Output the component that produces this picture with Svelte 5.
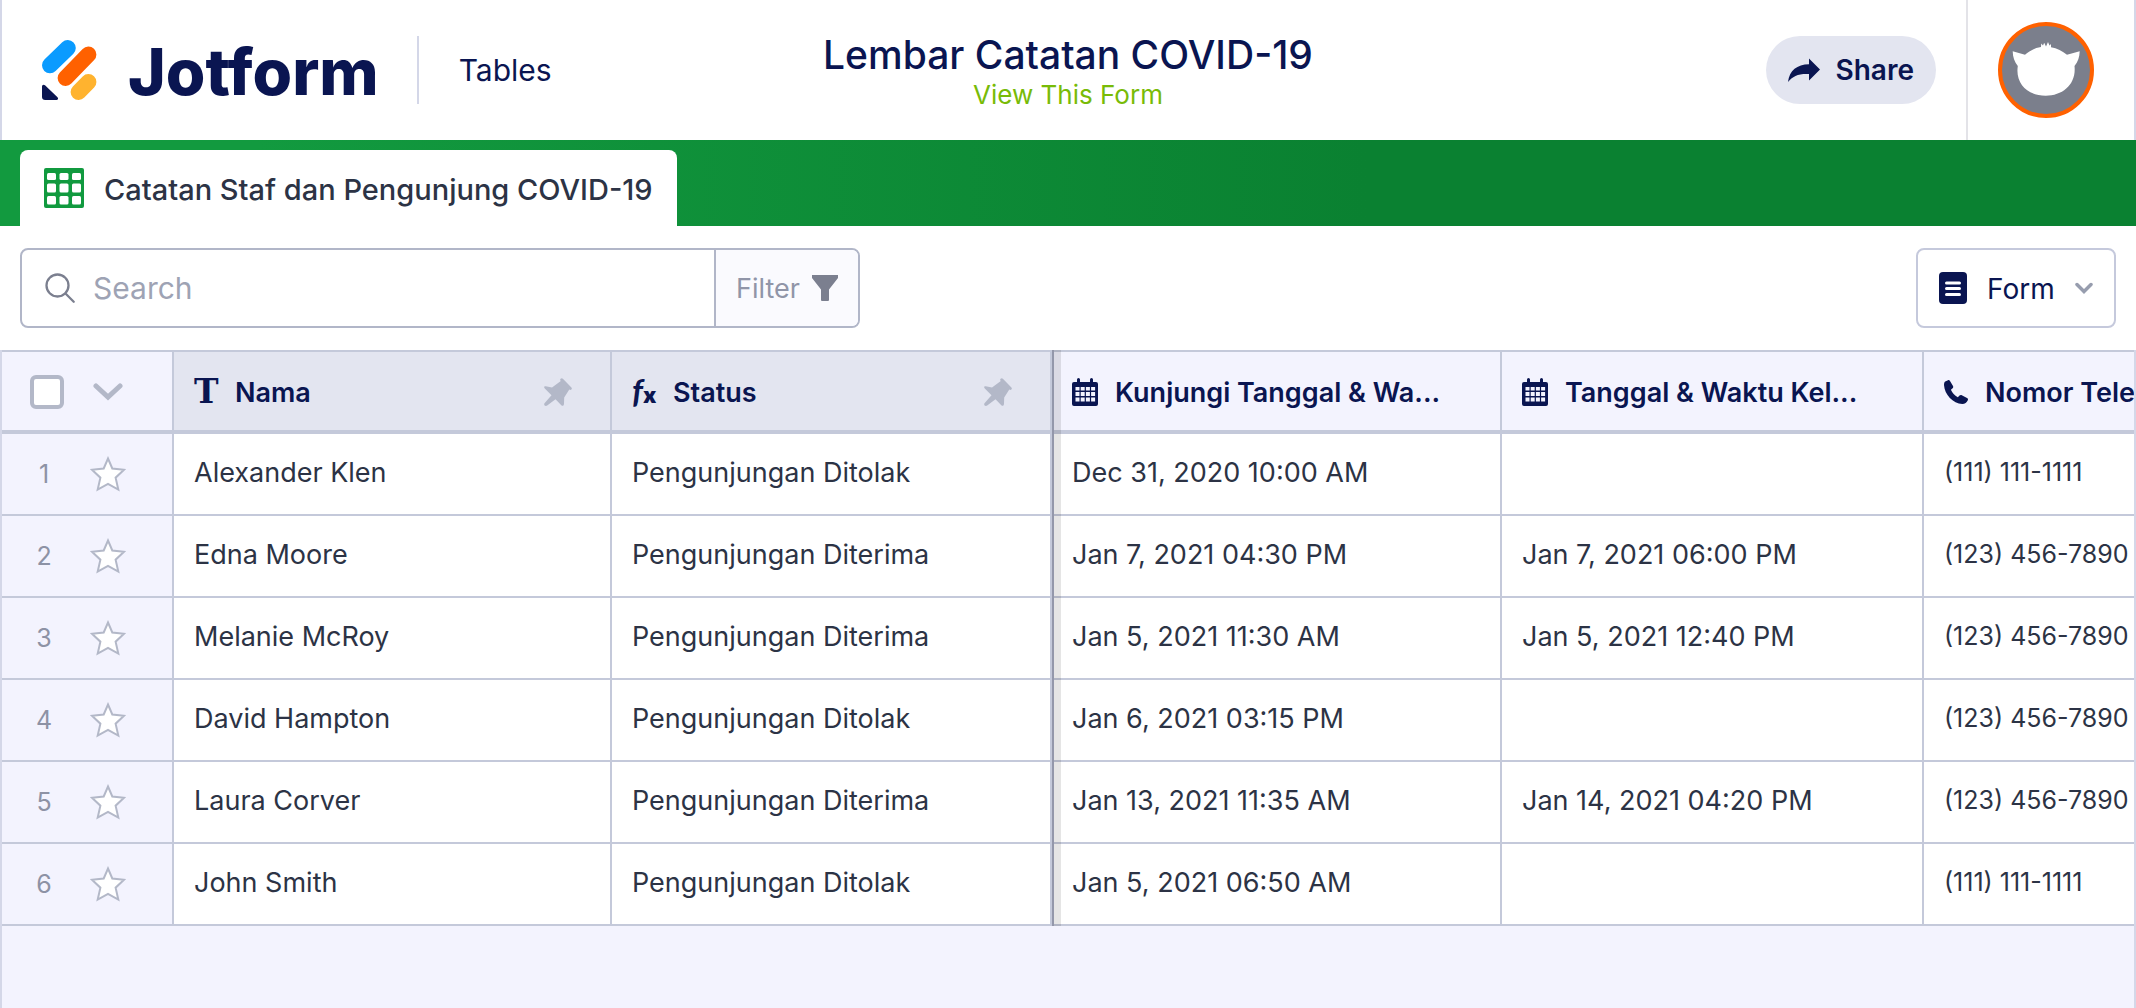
<script>
  const columns = [
    { key: 'name', label: 'Nama', icon: 'text', pinned: true },
    { key: 'status', label: 'Status', icon: 'formula', pinned: true },
    { key: 'visit', label: 'Kunjungi Tanggal & Wa...', icon: 'date' },
    { key: 'leave', label: 'Tanggal & Waktu Kel...', icon: 'date' },
    { key: 'phone', label: 'Nomor Telepon', icon: 'phone' }
  ];

  const rows = [
    { name: 'Alexander Klen', status: 'Pengunjungan Ditolak', visit: 'Dec 31, 2020 10:00 AM', leave: '', phone: '(111) 111-1111' },
    { name: 'Edna Moore', status: 'Pengunjungan Diterima', visit: 'Jan 7, 2021 04:30 PM', leave: 'Jan 7, 2021 06:00 PM', phone: '(123) 456-7890' },
    { name: 'Melanie McRoy', status: 'Pengunjungan Diterima', visit: 'Jan 5, 2021 11:30 AM', leave: 'Jan 5, 2021 12:40 PM', phone: '(123) 456-7890' },
    { name: 'David Hampton', status: 'Pengunjungan Ditolak', visit: 'Jan 6, 2021 03:15 PM', leave: '', phone: '(123) 456-7890' },
    { name: 'Laura Corver', status: 'Pengunjungan Diterima', visit: 'Jan 13, 2021 11:35 AM', leave: 'Jan 14, 2021 04:20 PM', phone: '(123) 456-7890' },
    { name: 'John Smith', status: 'Pengunjungan Ditolak', visit: 'Jan 5, 2021 06:50 AM', leave: '', phone: '(111) 111-1111' }
  ];

  let search = $state('');
  let allSelected = $state(false);
  let view = $state('form');
</script>

<div class="page">
  <header>
    <div class="brand">
      <a class="logo" href="#home">
        <svg width="56" height="60" viewBox="0 0 56 60" fill="none" stroke-width="16" stroke-linecap="round">
          <path d="M8 25.3 25.8 8" stroke="#0a9bff" />
          <path d="M23.6 38 46.4 14.5" stroke="#ff6100" />
          <path d="M36.6 52 46.4 42" stroke="#ffb32f" />
          <path d="M0 46.6c0-1.8 1.7-2.5 3-1.3l12.5 11.9c1.2 1.2.5 2.8-1 2.8H3.2C1.3 60 0 58.8 0 57z" fill="#0a1551" />
        </svg>
        <span>Jotform</span>
      </a>
      <a class="product" href="#tables">Tables</a>
    </div>

    <div class="title">
      <h1>Lembar Catatan COVID-19</h1>
      <a href="#form">View This Form</a>
    </div>

    <div class="account">
      <button class="share">
        <svg width="32" height="24" viewBox="0 0 32 24" fill="#0a1551">
          <path d="M21 .5 32 11.5 21 22.5V16C11 15.4 4.5 18 0 24 1.5 12.5 9 6.5 21 6.3z" />
        </svg>
        Share
      </button>
      <button class="profile" aria-label="Account">
        <svg width="96" height="96" viewBox="0 0 96 96">
          <circle cx="48" cy="48" r="46" fill="#7b7f8c" stroke="#ff6100" stroke-width="4" />
          <path fill="#fff" d="M14.7 29.3 27 32.8C32 28.5 37 25.8 43 25L43.2 21.5 45 23.5 46.2 20.8 48 24.5 50 20 51.5 23.5 53 22V25.2C59 26 64.5 29 69 32.8L81.7 29.3C81.5 35 80 40 76.5 44 78.5 62 65 73.7 47.7 73.7S17 62 19.8 44C16.5 40 14.8 35 14.7 29.3z" />
        </svg>
      </button>
    </div>
  </header>

  <nav>
    <a class="tab" href="#sheet">
      <svg width="40" height="40" viewBox="0 0 40 40">
        <rect width="40" height="40" rx="2" fill="#119a3f" />
        <g fill="#fff">
          {#each [3, 15.5, 28] as x}
            <rect {x} y="5" width="9" height="7" rx="1.5" />
            <rect {x} y="15.5" width="9" height="9" rx="1.5" />
            <rect {x} y="28" width="9" height="8.5" rx="1.5" />
          {/each}
        </g>
      </svg>
      <span>Catatan Staf dan Pengunjung COVID-19</span>
    </a>
  </nav>

  <div class="toolbar">
    <div class="search">
      <label for="search" aria-label="Search">
        <svg width="30" height="30" viewBox="0 0 30 30" fill="none" stroke="#7b7f8f" stroke-width="2.3" stroke-linecap="round">
          <circle cx="12.5" cy="12.5" r="11" />
          <path d="M20.5 20.5 28.7 28.7" />
        </svg>
      </label>
      <input id="search" type="text" placeholder="Search" bind:value={search} />
      <button class="filter">
        Filter
        <svg width="26" height="26" viewBox="0 0 26 26" fill="#7b7f8f">
          <path d="M0 0H26V3L17 14.5V25Q17 26 16 26H10Q9 26 9 25V14.5L0 3z" />
        </svg>
      </button>
    </div>

    <label class="view">
      <svg width="28" height="32" viewBox="0 0 28 32">
        <rect width="28" height="32" rx="4" fill="#0a1551" />
        <path d="M7.5 11H20.5M7.5 16.5H20.5M7.5 22.5H20.5" stroke="#fff" stroke-width="3" stroke-linecap="round" />
      </svg>
      <select bind:value={view} aria-label="View">
        <option value="form">Form</option>
      </select>
      <svg class="arrow" width="18" height="12" viewBox="0 0 18 12" fill="none" stroke="#979dae" stroke-width="3.5" stroke-linecap="round">
        <path d="M2 2.5 9 9.5 16 2.5" />
      </svg>
    </label>
  </div>

  <main>
    <table>
      <thead>
        <tr>
          <th class="select-col">
            <div class="row-tools">
              <input type="checkbox" aria-label="Select all rows" bind:checked={allSelected} />
              <button aria-label="Selection options">
                <svg width="30" height="20" viewBox="0 0 30 20" fill="none" stroke="#b3b8c8" stroke-width="5" stroke-linecap="round">
                  <path d="M3 4 15 15 27 4" />
                </svg>
              </button>
            </div>
          </th>
          {#each columns as column}
            <th class="{column.key}-col" class:pinned={column.pinned} scope="col">
              <div class="heading">
                {#if column.icon === 'text'}
                  <span class="type-text" aria-hidden="true">T</span>
                {:else if column.icon === 'formula'}
                  <span class="type-formula" aria-hidden="true"><i>f</i><b>x</b></span>
                {:else if column.icon === 'date'}
                  <svg width="26" height="28" viewBox="0 0 26 28">
                    <path fill="#0a1551" d="M5 4V1.5a1.5 1.5 0 0 1 3 0V4h10V1.5a1.5 1.5 0 0 1 3 0V4h3a2 2 0 0 1 2 2V26a2 2 0 0 1-2 2H2a2 2 0 0 1-2-2V6a2 2 0 0 1 2-2z" />
                    <g fill="#f3f3fe">
                      {#each [3.5, 8.7, 13.9, 19.1] as x}
                        <rect {x} y="9" width="4" height="3.5" />
                        <rect {x} y="14" width="4" height="4" />
                        <rect {x} y="19.5" width="4" height="4" />
                      {/each}
                    </g>
                  </svg>
                {:else}
                  <svg width="24" height="24" viewBox="0 0 24 24">
                    <path fill="#0a1551" d="M1.2 1.5 4 .2C4.8-.1 5.5.1 6 1L9 6C9.4 6.9 9.2 7.6 8.6 8.2L6.9 9.8C8.3 13 10.6 15.5 13.8 17.2L15.5 15.5C16.2 14.9 17 14.8 17.8 15.2L23 18C24 18.5 24.2 19.3 23.8 20.2 22.8 22.4 20.9 24 18.3 24 9 23.5.5 14.5 0 5 0 3.4.3 2.2 1.2 1.5z" />
                  </svg>
                {/if}
                <span>{column.label}</span>
                {#if column.pinned}
                  <button class="pin" aria-label="Unpin {column.label}">
                    <svg width="28" height="28" viewBox="0 0 28 28" fill="#b3b8c8">
                      <path d="M16.6.8C17.3.1 18.2.1 18.9.8L27.4 9.5C28 10.2 28 11 27.4 11.6 26.7 12.2 25.9 12 25.3 11.5L20.2 19.5 20 25.5C20 28 18.5 28.4 17.3 27.2L11.5 21.3 3.2 27.6C1.2 28.7-.6 27 .5 25.2L7.5 17.3.8 10.5C-.4 9.3.2 8 1.7 8.2L8 9.5 16.8 3.1C16 2.3 16 1.4 16.6.8z" />
                    </svg>
                  </button>
                {/if}
              </div>
            </th>
          {/each}
        </tr>
      </thead>
      <tbody>
        {#each rows as row, i}
          <tr>
            <th class="select-col" scope="row">
              <div class="row-tools">
                <span class="number">{i + 1}</span>
                <button aria-label="Star row {i + 1}">
                  <svg width="36" height="36" viewBox="0 0 36 36" fill="#fff" stroke="#b3b8c8" stroke-width="2">
                    <path d="M18 2.5 22.3 12.5 34 13.8 25.6 21.7 28.3 33.5 18 27.8 7.7 33.5 10.4 21.7 2 13.8 13.7 12.5z" />
                  </svg>
                </button>
              </div>
            </th>
            {#each columns as column}
              <td class="{column.key}-col">{row[column.key]}</td>
            {/each}
          </tr>
        {/each}
      </tbody>
    </table>
  </main>
</div>

<style>
  :global(body) {
    margin: 0;
  }

  .page,
  .page * {
    box-sizing: border-box;
  }

  .page {
    display: flex;
    flex-direction: column;
    min-height: 100vh;
    overflow: hidden;
    background: #fff;
    color: #2c3345;
    font-family: Inter, "Liberation Sans", sans-serif;
    font-size: 27px;
  }

  svg {
    display: block;
    flex: none;
  }

  a {
    color: inherit;
    text-decoration: none;
  }

  button,
  input,
  select {
    margin: 0;
    padding: 0;
    border: none;
    background: none;
    color: inherit;
    font: inherit;
  }

  button {
    cursor: pointer;
  }

  header {
    display: grid;
    grid-template-columns: 1fr auto 1fr;
    height: 140px;
    border: solid #d4d7e8;
    border-width: 0 2px;
    color: #0a1551;
  }

  .brand {
    display: flex;
    align-items: center;
    padding-left: 40px;
  }

  .logo {
    display: flex;
    align-items: center;
    gap: 30px;
    font-size: 64px;
    font-weight: 800;
    line-height: 68px;
  }

  .logo span {
    padding-top: 4px;
  }

  .product {
    margin-left: 38px;
    padding-left: 40px;
    border-left: 2px solid #d4d7e8;
    font-size: 30px;
    line-height: 68px;
  }

  .title {
    display: flex;
    flex-direction: column;
    align-items: center;
    padding-top: 33px;
  }

  h1 {
    margin: 0;
    font-size: 39px;
    font-weight: 500;
    line-height: 44px;
  }

  .title a {
    color: #78bb07;
    font-size: 26px;
    line-height: 36px;
  }

  .account {
    display: flex;
    align-items: center;
    justify-content: flex-end;
  }

  .share {
    display: flex;
    align-items: center;
    gap: 16px;
    height: 68px;
    margin-right: 30px;
    padding: 0 22px;
    border-radius: 34px;
    background: #e3e5f0;
    font-size: 28px;
    font-weight: 600;
  }

  .profile {
    height: 100%;
    padding: 0 40px 0 30px;
    border-left: 2px solid #e3e3e8;
  }

  nav {
    display: flex;
    height: 86px;
    padding: 10px 20px 0;
    background: linear-gradient(90deg, #129a3f 12%, #0a8131 64%);
  }

  .tab {
    display: flex;
    align-items: center;
    gap: 20px;
    padding: 0 24px;
    border-radius: 8px 8px 0 0;
    background: #fff;
    font-size: 29px;
    font-weight: 500;
  }

  .tab span {
    padding-top: 2px;
  }

  .toolbar {
    display: flex;
    justify-content: space-between;
    padding: 22px 20px;
  }

  .search {
    display: flex;
    align-items: center;
    width: 840px;
    height: 80px;
    border: 2px solid #b1b6c8;
    border-radius: 8px;
    overflow: hidden;
  }

  .search label {
    padding: 0 18px 0 23px;
  }

  .search input {
    flex: 1;
    min-width: 0;
    height: 100%;
    font-size: 30px;
    outline: none;
  }

  .search input::placeholder {
    color: #9ea3b4;
    opacity: 1;
  }

  .filter {
    display: flex;
    align-items: center;
    gap: 12px;
    height: 100%;
    padding: 0 20px;
    border-left: 2px solid #b1b6c8;
    background: #fafafe;
    color: #9095a8;
  }

  .view {
    display: flex;
    align-items: center;
    height: 80px;
    padding: 0 21px;
    border: 2px solid #c5c9dc;
    border-radius: 8px;
    color: #0a1551;
    font-size: 28px;
  }

  .view select {
    margin: 0 20px;
    padding-top: 2px;
    appearance: none;
    cursor: pointer;
  }

  .arrow {
    pointer-events: none;
  }

  main {
    flex: 1;
    border: solid #d4d7e8;
    border-width: 0 2px;
    background: #f3f3fe;
    overflow: hidden;
  }

  table {
    width: 100%;
    table-layout: fixed;
    border-collapse: separate;
    border-spacing: 0;
  }

  th,
  td {
    position: relative;
    height: 82px;
    padding: 0 20px;
    border: solid #c4c9da;
    border-width: 0 2px 2px 0;
    text-align: left;
    white-space: nowrap;
    overflow: hidden;
  }

  td {
    padding-bottom: 4px;
    background: #fff;
  }

  thead th {
    height: 84px;
    padding-top: 2px;
    border-width: 2px 2px 4px 0;
    background: #f3f3fe;
    color: #0a1551;
    font-weight: 600;
  }

  thead th.pinned {
    background: #e3e5f0;
  }

  .select-col {
    width: 172px;
    padding-left: 28px;
    font-weight: 400;
  }

  .name-col {
    width: 438px;
  }

  .status-col {
    width: 440px;
  }

  .visit-col {
    width: 450px;
    overflow: visible;
  }

  .leave-col {
    width: 422px;
  }

  .phone-col {
    padding-right: 0;
    border-right: none;
  }

  td.phone-col {
    font-size: 25px;
  }

  /* edge of the pinned columns */
  .visit-col::before {
    content: '';
    position: absolute;
    top: 0;
    bottom: -2px;
    left: 0;
    width: 7px;
    border-left: 2px solid #9397aa;
    background: rgba(0, 0, 0, 0.1);
  }

  thead .visit-col::before {
    top: -2px;
    bottom: -4px;
  }

  .row-tools {
    display: grid;
    grid-template-columns: 34px 36px;
    align-items: center;
    justify-items: center;
    gap: 26px;
  }

  .row-tools input {
    width: 34px;
    height: 34px;
    border: 4px solid #b3b8c8;
    border-radius: 6px;
    background: #fff;
    appearance: none;
  }

  .number {
    padding-right: 6px;
    color: #8d92a5;
    font-size: 25px;
  }

  .heading {
    display: flex;
    align-items: center;
    gap: 17px;
  }

  .type-text {
    width: 24px;
    font-family: "DejaVu Serif", serif;
    font-size: 33px;
    font-weight: 700;
    line-height: 32px;
  }

  .type-formula {
    display: flex;
    align-items: baseline;
    width: 24px;
    font-size: 22px;
    line-height: 32px;
  }

  .type-formula i {
    font-family: Lato, sans-serif;
    font-size: 33px;
    font-weight: 700;
  }

  .pin {
    margin-left: auto;
    margin-right: 18px;
  }
</style>
